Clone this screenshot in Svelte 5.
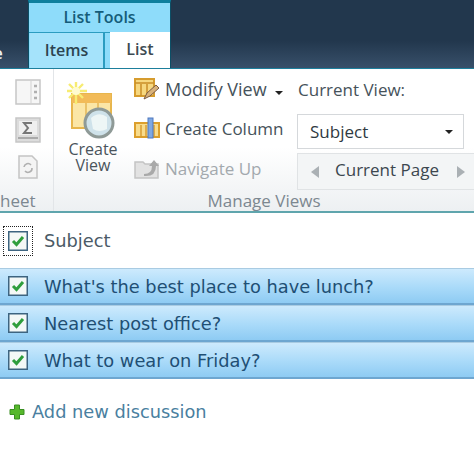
<script>
	const rows = ["What's the best place to have lunch?", 'Nearest post office?', 'What to wear on Friday?'];
</script>

{#snippet check()}
	<svg class="check" width="20" height="20" viewBox="0 0 20 20" aria-hidden="true">
		<rect x="0.75" y="0.75" width="18.5" height="18.5" fill="#f4f8f6" stroke="#3d6480" stroke-width="1.5"></rect>
		<path d="M5 10l3.500 3.500L15 6" fill="none" stroke="#2f9e3c" stroke-width="3"></path>
	</svg>
{/snippet}

<div class="page">
	<header class="top">
		<span class="cut">e</span>
		<div class="context">
			<div class="context-title">List Tools</div>
			<div class="tabs">
				<div class="tab">Items</div>
				<div class="tab active">List</div>
			</div>
		</div>
	</header>

	<section class="ribbon">
		<div class="group sheet">
			<div class="small-icons">
				<svg width="26" height="26" viewBox="0 0 26 26" aria-hidden="true">
					<rect x="1" y="1" width="24" height="24" fill="#f6f6f6" stroke="#c6c6c6" stroke-width="1.5"></rect>
					<path d="M16 1v24" stroke="#d2d2d2"></path>
					<path d="M19 7h3M19 13h3M19 19h3" stroke="#b0b0b0" stroke-width="2.5"></path>
				</svg>
				<svg width="26" height="26" viewBox="0 0 26 26" aria-hidden="true">
					<rect x="1" y="1" width="24" height="24" fill="#dcdcdc" stroke="#c6c6c6" stroke-width="1.5"></rect>
					<rect x="4" y="4" width="18" height="14" fill="#efefef"></rect>
					<path d="M17 6H9l4 5-4 5h8" fill="none" stroke="#777" stroke-width="2"></path>
					<path d="M3 21h20" stroke="#aaa" stroke-width="2"></path>
				</svg>
				<svg width="22" height="24" viewBox="0 0 22 24" aria-hidden="true">
					<path d="M2 1h13l5 5v17H2z" fill="#f4f4f4" stroke="#c4c4c4" stroke-width="1.5"></path>
					<path d="M7 12a4 4 0 0 1 7-2M15 13a4 4 0 0 1-7 3" fill="none" stroke="#b0b0b0" stroke-width="1.6"></path>
				</svg>
			</div>
			<div class="group-label sheet-label">heet</div>
		</div>

		<div class="group manage">
			<div class="controls">
				<div class="create">
					<svg width="52" height="58" viewBox="0 0 52 58" aria-hidden="true">
						<rect x="5" y="13" width="39" height="34" fill="#fbe6a6" stroke="#e7b64d" stroke-width="2"></rect>
						<rect x="5" y="13" width="39" height="9" fill="#f2bb58"></rect>
						<path d="M19 22v25M31 22v25" stroke="#e9c26a" stroke-width="2"></path>
						<circle cx="32" cy="42" r="14" fill="#cfe2ea" stroke="#8f9a97" stroke-width="3"></circle>
						<path d="M24 37q8-7 16-1v12q-8 4-14 0z" fill="#eef6f6"></path>
						<path d="M9 1v22M0 10h20M2 3l14 14M16 3L2 17" stroke="#f7ec72" stroke-width="2.4"></path>
						<circle cx="9" cy="10" r="4" fill="#fffbd0"></circle>
					</svg>
					<div class="create-label">Create<br />View</div>
				</div>

				<div class="commands">
					<div class="command">
						<svg width="26" height="24" viewBox="0 0 26 24" aria-hidden="true">
							<rect x="1" y="2" width="19" height="17" fill="#f6d77f" stroke="#d69c2e" stroke-width="2"></rect>
							<path d="M7 7v12M13 7v12M1 6h19" stroke="#c98f2a" stroke-width="1.5"></path>
							<path d="M10 22l3-6 9-8 3 3-9 8z" fill="#d9b27a" stroke="#7a5a45"></path>
						</svg>
						<span class="wide">Modify View</span>
						<i class="caret down"></i>
					</div>
					<div class="command">
						<svg width="26" height="24" viewBox="0 0 26 24" aria-hidden="true">
							<rect x="1" y="6" width="24" height="14" fill="#f8dc8c" stroke="#dc9f2c" stroke-width="2"></rect>
							<path d="M7 8v12M12 8v12M20 8v12" stroke="#d8992c" stroke-width="1.4"></path>
							<rect x="14" y="1" width="5" height="20" fill="#7fa8e2" stroke="#4f79bf"></rect>
						</svg>
						<span>Create Column</span>
					</div>
					<div class="command off">
						<svg width="26" height="24" viewBox="0 0 26 24" aria-hidden="true">
							<path d="M1 6h8l2 2h13v14H1z" fill="#e2e2e2" stroke="#c4c4c4" stroke-width="1.5"></path>
							<path d="M10 18q8 0 8-8h-3l5-6 5 6h-3q0 11-12 10z" fill="#a9a9a9"></path>
						</svg>
						<span>Navigate Up</span>
					</div>
				</div>

				<div class="views">
					<div class="views-label">Current View:</div>
					<div class="select">
						<span>Subject</span>
						<i class="caret"></i>
					</div>
					<div class="pager">
						<i class="arrow left"></i>
						<span>Current Page</span>
						<i class="arrow right"></i>
					</div>
				</div>
			</div>
			<div class="group-label">Manage Views</div>
		</div>
	</section>

	<main class="list">
		<div class="head-row">
			<div class="focus">{@render check()}</div>
			<span>Subject</span>
		</div>
		{#each rows as row (row)}
			<div class="row">
				{@render check()}
				<span>{row}</span>
			</div>
		{/each}
		<div class="add">
			<svg width="16" height="16" viewBox="0 0 16 16" aria-hidden="true">
				<path d="M5.500 1h5v4.500H15v5h-4.500V15h-5v-4.500H1v-5h4.500z" fill="#57b82c" stroke="#3a8f22"></path>
			</svg>
			<span>Add new discussion</span>
		</div>
	</main>
</div>

<style>
	:global(body) {
		margin: 0;
		background: #fff;
	}

	.page {
		width: 474px;
		height: 474px;
		overflow: hidden;
		background: #fff;
		font-family: 'Open Sans', 'Noto Sans', sans-serif;
	}

	.top {
		height: 69px;
		box-sizing: border-box;
		display: flex;
		align-items: flex-end;
		background: linear-gradient(#22374d, #22374d 60%, #38506a);
		border-bottom: 1px solid #1d7f9c;
	}

	.cut {
		flex: none;
		width: 35px;
		margin-left: -7px;
		padding-bottom: 4px;
		font-size: 17px;
		font-weight: 600;
		color: #f1f4f7;
	}

	.context {
		flex: none;
		width: 143px;
		height: 68px;
		box-sizing: border-box;
		border-top: 3px solid #0e7f9d;
		border-left: 1px solid #0c4f66;
		border-right: 1px solid #0c4f66;
		background: #8edcfa;
		display: flex;
		flex-direction: column;
	}

	.context-title {
		height: 30px;
		text-align: center;
		line-height: 28px;
		font-size: 16px;
		font-weight: 600;
		color: #155c79;
	}

	.tabs {
		flex: 1;
		display: flex;
		gap: 5px;
		padding-left: 1px;
		border-top: 1px solid #2b9cc0;
	}

	.tab {
		flex: 0 0 75px;
		box-sizing: border-box;
		text-align: center;
		line-height: 35px;
		font-size: 16px;
		font-weight: 600;
		color: #2c4350;
		background: #a5e3fb;
		border-right: 2px solid #2b9cc0;
	}

	.tab.active {
		flex: 0 0 60px;
		background: #fff;
		border-right: none;
		color: #3c4a52;
		margin-top: -1px;
	}

	.ribbon {
		height: 144px;
		box-sizing: border-box;
		display: flex;
		border-bottom: 2px solid #5fa5ad;
		background: linear-gradient(#fff, #fff 55%, #edf0f2);
	}

	.group {
		display: flex;
		flex-direction: column;
		box-sizing: border-box;
	}

	.sheet {
		flex: none;
		width: 54px;
		border-right: 1px solid #e2e5e8;
	}

	.small-icons {
		flex: 1;
		display: flex;
		flex-direction: column;
		align-items: center;
		gap: 12px;
		padding: 10px 0 0 3px;
		box-sizing: border-box;
	}

	.group-label {
		height: 21px;
		text-align: center;
		line-height: 22px;
		font-size: 17px;
		color: #7c8790;
	}

	.sheet-label {
		text-align: right;
		padding-right: 21px;
	}

	.manage {
		flex: 1;
		min-width: 0;
	}

	.controls {
		flex: 1;
		min-height: 0;
		display: flex;
	}

	.create {
		flex: none;
		width: 78px;
		padding: 12px 0 0 0;
		display: flex;
		flex-direction: column;
		align-items: center;
	}

	.create-label {
		margin-top: 2px;
		text-align: center;
		line-height: 16px;
		font-size: 16px;
		color: #4a545b;
	}

	.commands {
		flex: none;
		padding: 4px 0 0 2px;
		width: 163px;
		display: flex;
		flex-direction: column;
		gap: 7.500px;
	}

	.command {
		height: 32px;
		display: flex;
		align-items: center;
		gap: 5px;
		font-size: 17px;
		color: #46525a;
		white-space: nowrap;
	}

	.command .wide {
		font-size: 18px;
	}

	.command.off {
		color: #a3a9ae;
	}

	.caret {
		margin-left: auto;
		width: 0;
		height: 0;
		border-left: 4px solid transparent;
		border-right: 4px solid transparent;
		border-top: 4px solid #222;
	}

	.caret.down {
		margin: 8px 0 0 3px;
	}

	.views {
		flex: none;
		width: 180px;
		padding-top: 9px;
	}

	.views-label {
		padding-left: 1px;
		font-size: 17px;
		line-height: 24px;
		color: #46525a;
		white-space: nowrap;
	}

	.select {
		margin-top: 12px;
		width: 167px;
		height: 35px;
		box-sizing: border-box;
		display: flex;
		align-items: center;
		padding: 0 10px 0 12px;
		border: 1px solid #d5d8db;
		background: #fff;
		font-size: 17px;
		color: #2f3a42;
	}

	.pager {
		margin-top: 4px;
		height: 37px;
		box-sizing: border-box;
		display: flex;
		align-items: center;
		border: 1px solid #e0e3e5;
		border-right: none;
		background: #f3f5f6;
		font-size: 17px;
		color: #3c474f;
		white-space: nowrap;
	}

	.pager span {
		margin: -4px 12px 0 16px;
	}

	.arrow {
		flex: none;
		width: 0;
		height: 0;
		border-top: 6px solid transparent;
		border-bottom: 6px solid transparent;
	}

	.arrow.left {
		margin-left: 13px;
		border-right: 8px solid #aab0b4;
	}

	.arrow.right {
		margin-left: 6px;
		border-left: 8px solid #aab0b4;
	}

	.list {
		font-family: 'DejaVu Sans', Verdana, sans-serif;
		font-size: 17.800px;
	}

	.head-row {
		height: 55px;
		display: flex;
		align-items: center;
		padding-left: 3px;
		gap: 11px;
		color: #4b5a66;
	}

	.focus {
		width: 30px;
		height: 30px;
		box-sizing: border-box;
		border: 1px dotted #222;
		display: flex;
		align-items: center;
		justify-content: center;
	}

	.row {
		height: 37px;
		box-sizing: border-box;
		display: flex;
		align-items: center;
		gap: 16px;
		padding-left: 8px;
		color: #1f4f74;
		background: linear-gradient(#cdeafd, #a9daf9 55%, #8ecbf3);
		border-top: 1px solid #a9cbe2;
		border-bottom: 2px solid #6ea6d0;
		white-space: nowrap;
	}

	.add {
		margin-top: 22px;
		padding-left: 9px;
		display: flex;
		align-items: center;
		gap: 7px;
		color: #4a7f9f;
	}
</style>
